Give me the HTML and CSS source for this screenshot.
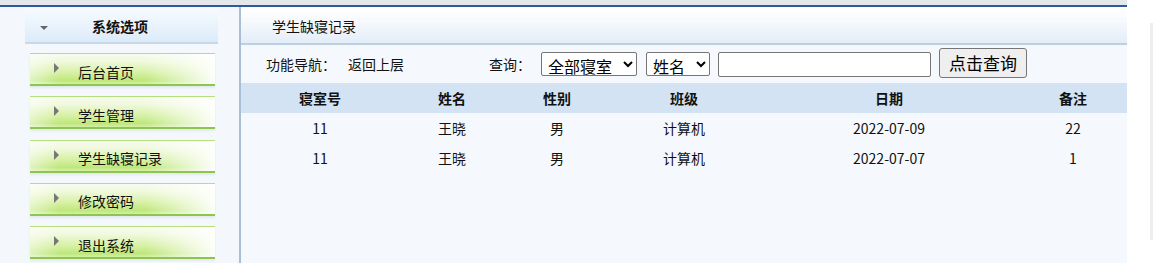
FILE: index.html
```html
<!DOCTYPE html>
<html lang="zh-CN">
<head>
  <meta charset="UTF-8">
  <title>学生缺寝记录</title>
  <link rel="stylesheet" href="styles.css">
</head>
<body>
  <div class="frame">
    <div class="topbar"></div>
    <div class="layout">
      <div class="sidebar">
        <div class="side-head">
          <span class="caret"></span>
          <span class="side-title">系统选项</span>
        </div>
        <ul class="menu">
          <li><span class="arrow"></span>后台首页</li>
          <li><span class="arrow"></span>学生管理</li>
          <li><span class="arrow"></span>学生缺寝记录</li>
          <li><span class="arrow"></span>修改密码</li>
          <li><span class="arrow"></span>退出系统</li>
        </ul>
      </div>
      <div class="main">
        <div class="title-bar">学生缺寝记录</div>
        <div class="nav-row">
          <span class="nav-label">功能导航：</span>
          <span class="nav-link">返回上层</span>
          <span class="query-label">查询：</span>
          <select class="sel sel-room">
            <option>全部寝室</option>
          </select>
          <select class="sel sel-field">
            <option>姓名</option>
          </select>
          <input type="text" class="keyword">
          <button class="btn">点击查询</button>
        </div>
        <table class="records">
          <thead>
            <tr>
              <th class="c1">寝室号</th>
              <th class="c2">姓名</th>
              <th class="c3">性别</th>
              <th class="c4">班级</th>
              <th class="c5">日期</th>
              <th class="c6">备注</th>
            </tr>
          </thead>
          <tbody>
            <tr>
              <td>11</td><td>王晓</td><td>男</td><td>计算机</td><td>2022-07-09</td><td>22</td>
            </tr>
            <tr>
              <td>11</td><td>王晓</td><td>男</td><td>计算机</td><td>2022-07-07</td><td>1</td>
            </tr>
          </tbody>
        </table>
      </div>
    </div>
  </div>
</body>
</html>
```

FILE: styles.css
```css
html, body {
  height: 263px;
  overflow: hidden;
}
body {
  margin: 0;
  background: #fff;
  font-family: "Noto Sans CJK SC", "DejaVu Sans", sans-serif;
  font-size: 14px;
  line-height: 20px;
  color: #111;
}
.frame {
  width: 1127px;
  height: 263px;
  overflow: hidden;
  display: flex;
  flex-direction: column;
  border-right: 23px solid #fff;
  box-shadow: 26px 0 0 -23px #eee;
}
.topbar {
  flex: none;
  height: 5px;
  background: #e4e7eb;
  border-bottom: 2px solid #30599a;
}
.layout {
  flex: 1;
  min-height: 0;
  display: flex;
}
.sidebar {
  width: 239px;
  background: #f4f8fd;
  border-right: 2px solid #a9bdd5;
}
.side-head {
  margin: 1px 0 0 25px;
  width: 193px;
  height: 36px;
  display: flex;
  align-items: center;
  padding-top: 1px;
  background: linear-gradient(#f7fbff, #dcebf9);
  border-bottom: 2px solid #c6d9eb;
  box-sizing: border-box;
}
.caret {
  width: 0;
  height: 0;
  margin-left: 15px;
  margin-top: 4px;
  border-left: 4px solid transparent;
  border-right: 4px solid transparent;
  border-top: 4px solid #666;
}
.side-title {
  margin-left: 44px;
  font-weight: bold;
  font-size: 14px;
  color: #111;
}
.menu {
  list-style: none;
  margin: 9px 0 0 30px;
  padding: 0;
}
.menu li {
  width: 185px;
  height: 33px;
  margin-bottom: 10.3px;
  box-sizing: border-box;
  display: flex;
  align-items: center;
  padding-top: 5px;
  color: #111;
  border-top: 1px solid #b4df7c;
  border-bottom: 2px solid #8cc650;
  background:
    linear-gradient(90deg, rgba(255,255,255,0.5) 0, rgba(255,255,255,0) 16%, rgba(255,255,255,0) 62%, rgba(255,255,255,0.95) 100%),
    linear-gradient(#f7fbee 0, #f0f9dc 25%, #d8f1a8 60%, #bfe77c 88%, #d4efa4 100%);
  box-shadow: 0 2px 2px #e2eaee;
}
.menu li:last-child {
  margin-bottom: 0;
}
.arrow {
  width: 0;
  height: 0;
  margin-left: 24px;
  margin-right: 19px;
  margin-top: -7px;
  border-top: 5px solid transparent;
  border-bottom: 5px solid transparent;
  border-left: 5px solid #777;
}
.main {
  flex: 1;
  background: #f5f9fe;
}
.title-bar {
  height: 38px;
  box-sizing: border-box;
  padding: 9px 0 0 31px;
  background: linear-gradient(#ffffff, #f6f9fd 40%, #e3edf8);
  border-bottom: 2px solid #bcd0e2;
  color: #111;
}
.nav-row {
  height: 38px;
  display: flex;
  align-items: center;
  padding: 0 0 0 25px;
  box-sizing: border-box;
  color: #111;
}
.nav-link {
  margin-left: 12px;
}
.query-label {
  margin-left: 85px;
  margin-right: 10px;
}
.sel {
  height: 24px;
  font-family: "Noto Sans CJK SC", sans-serif;
  font-size: 16px;
  border: 1px solid #767676;
  border-radius: 2px;
  background: #fff;
  color: #000;
  padding: 0 0 0 2px;
}
.sel-room {
  width: 96px;
}
.sel-field {
  width: 64px;
  margin-left: 9px;
}
.keyword {
  width: 213px;
  height: 25px;
  box-sizing: border-box;
  margin-left: 8px;
  border: 1px solid #767676;
  border-radius: 2px;
}
.btn {
  margin-left: 8px;
  margin-top: -3px;
  width: 88px;
  height: 30px;
  font-family: "Noto Sans CJK SC", sans-serif;
  font-size: 17px;
  color: #000;
  background: #efefef;
  border: 1px solid #767676;
  border-radius: 3px;
  padding: 0;
}
.records {
  width: 100%;
  border-collapse: collapse;
}
.records th,
.records td {
  height: 30px;
  box-sizing: border-box;
  padding: 0;
  text-align: center;
  color: #111;
}
.records th {
  background: #d3e3f3;
  font-weight: bold;
}
.c1 { width: 158px; }
.c2 { width: 106px; }
.c3 { width: 104px; }
.c4 { width: 150px; }
.c5 { width: 260px; }
```
